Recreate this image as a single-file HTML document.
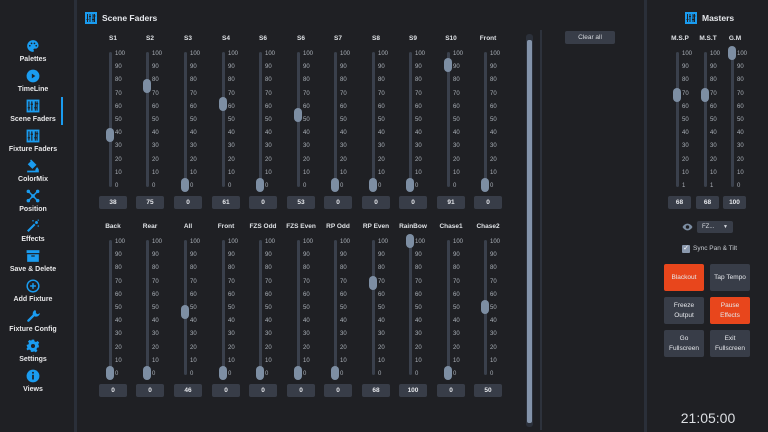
<!DOCTYPE html>
<html><head><meta charset="utf-8"><style>
*{margin:0;padding:0;box-sizing:border-box}
body{width:768px;height:432px;background:#1f2024;font-family:"Liberation Sans",sans-serif;color:#e6e8ec;position:relative;overflow:hidden}
.a{position:absolute}
.vsep{position:absolute;top:0;width:3px;height:432px;background:#2a2f39}
.nav{position:absolute;left:0;width:66px;text-align:center;font-size:7px;font-weight:bold;color:#e8e8ea}
.nav svg{display:block;margin:0 auto 3px}
.f{position:absolute;width:28px;height:178px}
.f .l{position:absolute;left:-8px;width:44px;top:2px;text-align:center;font-size:6.5px;font-weight:bold;color:#dfe2e6}
.f .t{position:absolute;left:10px;top:19px;width:3px;height:135px;background:#3a404c;border-radius:2px}
.f .s{position:absolute;left:16px;top:17px;height:140px;display:flex;flex-direction:column;justify-content:space-between;font-size:6px;line-height:8px;color:#aab0b8}
.f .h{position:absolute;left:7px;width:8px;height:14px;background:#7d8ea3;border-radius:4px}
.f .v{position:absolute;left:0;top:163px;width:28px;height:13px;background:#383d48;border-radius:2px;text-align:center;font-size:6.5px;font-weight:bold;line-height:13px;color:#e6e8ec}
.m{width:23px}
.m .t{left:8px}.m .h{left:5px}.m .s{left:14px}.m .v{width:23px}.m .l{left:-10px}
.btn{position:absolute;width:40px;height:27px;background:#383d48;border-radius:2px;font-size:6.5px;color:#e6e8ec;display:flex;align-items:center;justify-content:center;text-align:center;line-height:10px}
.or{background:#e8461c}
</style></head><body>
<!-- sidebar -->
<div class="vsep" style="left:74px"></div>
<div class="a" style="left:61px;top:97px;width:2px;height:28px;background:#1a9cf0"></div>
<div class="nav" style="top:39px"><svg width="14" height="14" viewBox="0 0 24 24"><path fill="#1a9cf0" d="M12 2C6.5 2 2 6.5 2 12s4.5 10 10 10c1 0 1.6-.7 1.6-1.6 0-.4-.2-.8-.4-1.1-.3-.3-.4-.7-.4-1.1 0-.9.7-1.6 1.6-1.6H16c3 0 5.5-2.5 5.5-5.5C21.5 6 17.2 2 12 2zM6.5 13a1.5 1.5 0 110-3 1.5 1.5 0 010 3zm3-4a1.5 1.5 0 110-3 1.5 1.5 0 010 3zm5 0a1.5 1.5 0 110-3 1.5 1.5 0 010 3zm3 4a1.5 1.5 0 110-3 1.5 1.5 0 010 3z"/></svg>Palettes</div>
<div class="nav" style="top:69px"><svg width="14" height="14" viewBox="0 0 24 24"><circle cx="12" cy="12" r="11" fill="#1a9cf0"/><path d="M10 8l6 4-6 4z" fill="#1f2024"/></svg>TimeLine</div>
<div class="nav" style="top:99px"><svg width="14" height="14" viewBox="0 0 24 24"><rect x="1" y="1" width="22" height="22" fill="#1a9cf0"/><path d="M5 4v16M3 15h4M10 4v16M8 9h4M16 20V4M14 15h4M19 20V4M17 8h4" stroke="#1f2024" stroke-width="2"/></svg>Scene Faders</div>
<div class="nav" style="top:129px"><svg width="14" height="14" viewBox="0 0 24 24"><rect x="1" y="1" width="22" height="22" fill="#1a9cf0"/><path d="M5 4v16M3 15h4M10 4v16M8 9h4M16 20V4M14 15h4M19 20V4M17 8h4" stroke="#1f2024" stroke-width="2"/></svg>Fixture Faders</div>
<div class="nav" style="top:159px"><svg width="14" height="14" viewBox="0 0 24 24"><path fill="#1a9cf0" d="M7 2l2-1 9 9-7 7-8-8 5-5zM19 14s3 3 3 5a3 3 0 01-6 0c0-2 3-5 3-5zM2 20h20v3H2z"/></svg>ColorMix</div>
<div class="nav" style="top:189px"><svg width="14" height="14" viewBox="0 0 24 24"><g stroke="#1a9cf0" stroke-width="2.5"><path d="M5 5l14 14M19 5L5 19"/></g><g fill="#1a9cf0"><circle cx="4" cy="4" r="3"/><circle cx="20" cy="4" r="3"/><circle cx="4" cy="20" r="3"/><circle cx="20" cy="20" r="3"/><rect x="9" y="9" width="6" height="6"/></g></svg>Position</div>
<div class="nav" style="top:219px"><svg width="14" height="14" viewBox="0 0 24 24"><path d="M3 21L15 9" stroke="#1a9cf0" stroke-width="3.5"/><g fill="#1a9cf0"><circle cx="18" cy="6" r="2.5"/><circle cx="12" cy="3" r="1.3"/><circle cx="21" cy="12" r="1.3"/><circle cx="21" cy="2" r="1.2"/></g></svg>Effects</div>
<div class="nav" style="top:249px"><svg width="14" height="14" viewBox="0 0 24 24"><rect x="1" y="2" width="22" height="5" fill="#1a9cf0"/><rect x="2" y="9" width="20" height="13" fill="#1a9cf0"/><rect x="9" y="11" width="6" height="2" fill="#1f2024"/></svg>Save &amp; Delete</div>
<div class="nav" style="top:279px"><svg width="14" height="14" viewBox="0 0 24 24"><circle cx="12" cy="12" r="10" fill="none" stroke="#1a9cf0" stroke-width="2.5"/><path d="M12 7v10M7 12h10" stroke="#1a9cf0" stroke-width="2.5"/></svg>Add Fixture</div>
<div class="nav" style="top:309px"><svg width="14" height="14" viewBox="0 0 24 24"><path d="M4 20l9-9" stroke="#1a9cf0" stroke-width="4" stroke-linecap="round"/><path fill="#1a9cf0" d="M15 2a7 7 0 00-3 9l4 2a7 7 0 008-6l-4 2-3-2V3z"/></svg>Fixture Config</div>
<div class="nav" style="top:339px"><svg width="14" height="14" viewBox="0 0 24 24"><path fill="#1a9cf0" d="M10 1h4l.6 3 2.6 1.1 2.6-1.7 2.8 2.8-1.7 2.6L22 11.4v3l-3 .6-1.1 2.6 1.7 2.6-2.8 2.8-2.6-1.7L11.4 22h-3l-.6-3-2.6-1.1-2.6 1.7L.8 17l1.7-2.6L1.4 11.8 1 10V10l3-.6 1.1-2.6L3.4 4.2 6.2 1.4l2.6 1.7L10 1z"/><circle cx="12" cy="12" r="3.5" fill="#1f2024"/></svg>Settings</div>
<div class="nav" style="top:369px"><svg width="14" height="14" viewBox="0 0 24 24"><circle cx="12" cy="12" r="11" fill="#1a9cf0"/><rect x="10.5" y="10" width="3" height="8" fill="#1f2024"/><circle cx="12" cy="6.5" r="1.7" fill="#1f2024"/></svg>Views</div>

<!-- header -->
<svg class="a" style="left:85px;top:12px" width="12" height="12" viewBox="0 0 24 24"><rect width="24" height="24" fill="#1a9cf0"/><path d="M5 4v16M3 15h4M10 4v16M8 9h4M16 20V4M14 15h4M19 20V4M17 8h4" stroke="#1f2024" stroke-width="2"/></svg>
<div class="a" style="left:102px;top:13px;font-size:8.5px;font-weight:bold">Scene Faders</div>

<!-- row 1 -->
<div class="f" style="left:99px;top:33px"><div class="l">S1</div><div class="t"></div><div class="s"><span>100</span><span>90</span><span>80</span><span>70</span><span>60</span><span>50</span><span>40</span><span>30</span><span>20</span><span>10</span><span>0</span></div><div class="h" style="top:95px"></div><div class="v">38</div></div>
<div class="f" style="left:136px;top:33px"><div class="l">S2</div><div class="t"></div><div class="s"><span>100</span><span>90</span><span>80</span><span>70</span><span>60</span><span>50</span><span>40</span><span>30</span><span>20</span><span>10</span><span>0</span></div><div class="h" style="top:46px"></div><div class="v">75</div></div>
<div class="f" style="left:174px;top:33px"><div class="l">S3</div><div class="t"></div><div class="s"><span>100</span><span>90</span><span>80</span><span>70</span><span>60</span><span>50</span><span>40</span><span>30</span><span>20</span><span>10</span><span>0</span></div><div class="h" style="top:145px"></div><div class="v">0</div></div>
<div class="f" style="left:212px;top:33px"><div class="l">S4</div><div class="t"></div><div class="s"><span>100</span><span>90</span><span>80</span><span>70</span><span>60</span><span>50</span><span>40</span><span>30</span><span>20</span><span>10</span><span>0</span></div><div class="h" style="top:64px"></div><div class="v">61</div></div>
<div class="f" style="left:249px;top:33px"><div class="l">S6</div><div class="t"></div><div class="s"><span>100</span><span>90</span><span>80</span><span>70</span><span>60</span><span>50</span><span>40</span><span>30</span><span>20</span><span>10</span><span>0</span></div><div class="h" style="top:145px"></div><div class="v">0</div></div>
<div class="f" style="left:287px;top:33px"><div class="l">S6</div><div class="t"></div><div class="s"><span>100</span><span>90</span><span>80</span><span>70</span><span>60</span><span>50</span><span>40</span><span>30</span><span>20</span><span>10</span><span>0</span></div><div class="h" style="top:75px"></div><div class="v">53</div></div>
<div class="f" style="left:324px;top:33px"><div class="l">S7</div><div class="t"></div><div class="s"><span>100</span><span>90</span><span>80</span><span>70</span><span>60</span><span>50</span><span>40</span><span>30</span><span>20</span><span>10</span><span>0</span></div><div class="h" style="top:145px"></div><div class="v">0</div></div>
<div class="f" style="left:362px;top:33px"><div class="l">S8</div><div class="t"></div><div class="s"><span>100</span><span>90</span><span>80</span><span>70</span><span>60</span><span>50</span><span>40</span><span>30</span><span>20</span><span>10</span><span>0</span></div><div class="h" style="top:145px"></div><div class="v">0</div></div>
<div class="f" style="left:399px;top:33px"><div class="l">S9</div><div class="t"></div><div class="s"><span>100</span><span>90</span><span>80</span><span>70</span><span>60</span><span>50</span><span>40</span><span>30</span><span>20</span><span>10</span><span>0</span></div><div class="h" style="top:145px"></div><div class="v">0</div></div>
<div class="f" style="left:437px;top:33px"><div class="l">S10</div><div class="t"></div><div class="s"><span>100</span><span>90</span><span>80</span><span>70</span><span>60</span><span>50</span><span>40</span><span>30</span><span>20</span><span>10</span><span>0</span></div><div class="h" style="top:25px"></div><div class="v">91</div></div>
<div class="f" style="left:474px;top:33px"><div class="l">Front</div><div class="t"></div><div class="s"><span>100</span><span>90</span><span>80</span><span>70</span><span>60</span><span>50</span><span>40</span><span>30</span><span>20</span><span>10</span><span>0</span></div><div class="h" style="top:145px"></div><div class="v">0</div></div>

<!-- row 2 -->
<div class="f" style="left:99px;top:221px"><div class="l">Back</div><div class="t"></div><div class="s"><span>100</span><span>90</span><span>80</span><span>70</span><span>60</span><span>50</span><span>40</span><span>30</span><span>20</span><span>10</span><span>0</span></div><div class="h" style="top:145px"></div><div class="v">0</div></div>
<div class="f" style="left:136px;top:221px"><div class="l">Rear</div><div class="t"></div><div class="s"><span>100</span><span>90</span><span>80</span><span>70</span><span>60</span><span>50</span><span>40</span><span>30</span><span>20</span><span>10</span><span>0</span></div><div class="h" style="top:145px"></div><div class="v">0</div></div>
<div class="f" style="left:174px;top:221px"><div class="l">All</div><div class="t"></div><div class="s"><span>100</span><span>90</span><span>80</span><span>70</span><span>60</span><span>50</span><span>40</span><span>30</span><span>20</span><span>10</span><span>0</span></div><div class="h" style="top:84px"></div><div class="v">46</div></div>
<div class="f" style="left:212px;top:221px"><div class="l">Front</div><div class="t"></div><div class="s"><span>100</span><span>90</span><span>80</span><span>70</span><span>60</span><span>50</span><span>40</span><span>30</span><span>20</span><span>10</span><span>0</span></div><div class="h" style="top:145px"></div><div class="v">0</div></div>
<div class="f" style="left:249px;top:221px"><div class="l">FZS Odd</div><div class="t"></div><div class="s"><span>100</span><span>90</span><span>80</span><span>70</span><span>60</span><span>50</span><span>40</span><span>30</span><span>20</span><span>10</span><span>0</span></div><div class="h" style="top:145px"></div><div class="v">0</div></div>
<div class="f" style="left:287px;top:221px"><div class="l">FZS Even</div><div class="t"></div><div class="s"><span>100</span><span>90</span><span>80</span><span>70</span><span>60</span><span>50</span><span>40</span><span>30</span><span>20</span><span>10</span><span>0</span></div><div class="h" style="top:145px"></div><div class="v">0</div></div>
<div class="f" style="left:324px;top:221px"><div class="l">RP Odd</div><div class="t"></div><div class="s"><span>100</span><span>90</span><span>80</span><span>70</span><span>60</span><span>50</span><span>40</span><span>30</span><span>20</span><span>10</span><span>0</span></div><div class="h" style="top:145px"></div><div class="v">0</div></div>
<div class="f" style="left:362px;top:221px"><div class="l">RP Even</div><div class="t"></div><div class="s"><span>100</span><span>90</span><span>80</span><span>70</span><span>60</span><span>50</span><span>40</span><span>30</span><span>20</span><span>10</span><span>0</span></div><div class="h" style="top:55px"></div><div class="v">68</div></div>
<div class="f" style="left:399px;top:221px"><div class="l">RainBow</div><div class="t"></div><div class="s"><span>100</span><span>90</span><span>80</span><span>70</span><span>60</span><span>50</span><span>40</span><span>30</span><span>20</span><span>10</span><span>0</span></div><div class="h" style="top:13px"></div><div class="v">100</div></div>
<div class="f" style="left:437px;top:221px"><div class="l">Chase1</div><div class="t"></div><div class="s"><span>100</span><span>90</span><span>80</span><span>70</span><span>60</span><span>50</span><span>40</span><span>30</span><span>20</span><span>10</span><span>0</span></div><div class="h" style="top:145px"></div><div class="v">0</div></div>
<div class="f" style="left:474px;top:221px"><div class="l">Chase2</div><div class="t"></div><div class="s"><span>100</span><span>90</span><span>80</span><span>70</span><span>60</span><span>50</span><span>40</span><span>30</span><span>20</span><span>10</span><span>0</span></div><div class="h" style="top:79px"></div><div class="v">50</div></div>

<!-- scrollbar -->
<div class="a" style="left:526px;top:34px;width:7px;height:393px;background:#2b303a;border-radius:3px"></div>
<div class="a" style="left:527px;top:40px;width:5px;height:383px;background:#8393aa;border-radius:2px"></div>
<div class="a" style="left:540px;top:30px;width:2px;height:400px;background:#2d323c"></div>
<div class="a" style="left:565px;top:31px;width:50px;height:13px;background:#383d48;border-radius:2px;font-size:6.5px;line-height:13px;text-align:center;color:#d8dbe0">Clear all</div>

<!-- masters -->
<div class="vsep" style="left:644px"></div>
<svg class="a" style="left:685px;top:12px" width="12" height="12" viewBox="0 0 24 24"><rect width="24" height="24" fill="#1a9cf0"/><path d="M5 4v16M3 15h4M10 4v16M8 9h4M16 20V4M14 15h4M19 20V4M17 8h4" stroke="#1f2024" stroke-width="2"/></svg>
<div class="a" style="left:702px;top:13px;font-size:8.5px;font-weight:bold">Masters</div>
<div class="f m" style="left:668px;top:33px"><div class="l">M.S.P</div><div class="t"></div><div class="s"><span>100</span><span>90</span><span>80</span><span>70</span><span>60</span><span>50</span><span>40</span><span>30</span><span>20</span><span>10</span><span>1</span></div><div class="h" style="top:55px"></div><div class="v">68</div></div>
<div class="f m" style="left:696px;top:33px"><div class="l">M.S.T</div><div class="t"></div><div class="s"><span>100</span><span>90</span><span>80</span><span>70</span><span>60</span><span>50</span><span>40</span><span>30</span><span>20</span><span>10</span><span>1</span></div><div class="h" style="top:55px"></div><div class="v">68</div></div>
<div class="f m" style="left:723px;top:33px"><div class="l">G.M</div><div class="t"></div><div class="s"><span>100</span><span>90</span><span>80</span><span>70</span><span>60</span><span>50</span><span>40</span><span>30</span><span>20</span><span>10</span><span>0</span></div><div class="h" style="top:13px"></div><div class="v">100</div></div>

<svg class="a" style="left:682px;top:223px" width="11" height="8" viewBox="0 0 22 16"><path d="M1 8c5-9 15-9 20 0-5 9-15 9-20 0z" fill="#7d8ea3"/><circle cx="11" cy="8" r="3.5" fill="#1f2024"/></svg>
<div class="a" style="left:697px;top:221px;width:36px;height:12px;background:#383d48;border-radius:2px;font-size:6px;line-height:12px;padding-left:5px;color:#d8dbe0">FZ...<span style="position:absolute;right:5px;font-size:5px">▼</span></div>
<div class="a" style="left:682px;top:245px;width:8px;height:8px;background:#8a98ad;border-radius:1px;font-size:7px;line-height:8px;text-align:center;color:#fff">✓</div>
<div class="a" style="left:693px;top:245px;font-size:6.5px;color:#c8ccd2">Sync Pan &amp; Tilt</div>
<div class="btn or" style="left:664px;top:264px">Blackout</div>
<div class="btn" style="left:710px;top:264px">Tap Tempo</div>
<div class="btn" style="left:664px;top:297px">Freeze<br>Output</div>
<div class="btn or" style="left:710px;top:297px">Pause<br>Effects</div>
<div class="btn" style="left:664px;top:330px">Go<br>Fullscreen</div>
<div class="btn" style="left:710px;top:330px">Exit<br>Fullscreen</div>
<div class="a" style="left:680px;top:410px;width:56px;text-align:center;font-size:14px;color:#dcdfe3">21:05:00</div>
</body></html>
